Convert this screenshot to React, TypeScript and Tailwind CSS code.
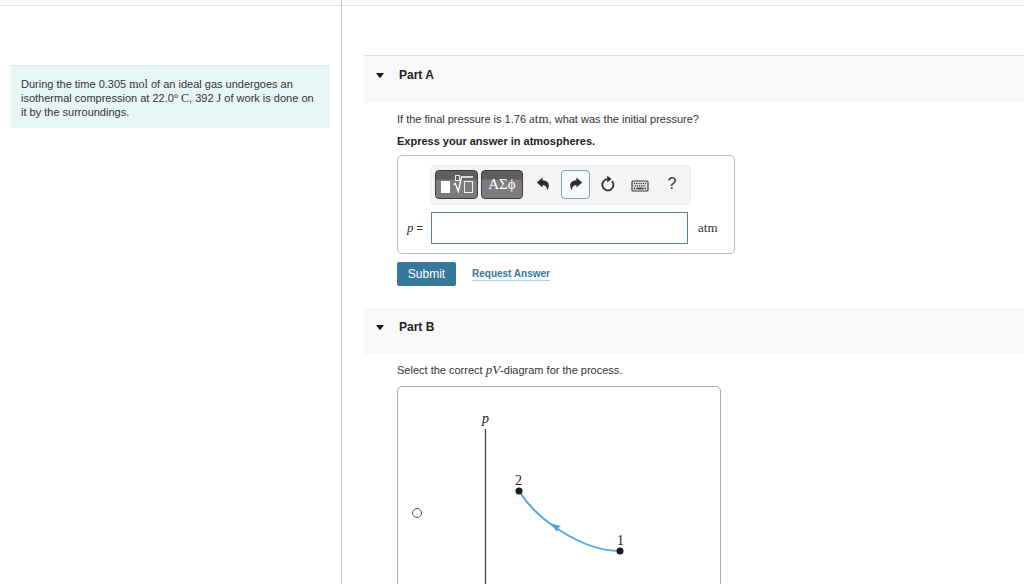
import type { ReactNode } from "react";

function MathText({ children, italic }: { children: ReactNode; italic?: boolean }) {
  return (
    <span
      className={
        italic
          ? "font-['Liberation_Serif',serif] text-[13px] leading-none italic"
          : "font-['Liberation_Serif',serif] text-[13px] leading-none"
      }
    >
      {children}
    </span>
  );
}

// unit inside a multi-line paragraph, small enough for the tight leading
function Unit({ children }: { children: ReactNode }) {
  return <span className="font-['Liberation_Serif',serif] text-xs leading-none">{children}</span>;
}

function PartHeader({ title, first }: { title: string; first?: boolean }) {
  return (
    <div
      className={
        first
          ? "flex h-12 items-start border-t border-[#dcdcdc] bg-[#f8f8f8] pt-[11px] pl-3"
          : "flex h-[46px] items-start bg-[#f8f8f8] pt-[11px] pl-3"
      }
    >
      <button type="button" className="flex h-4 items-center gap-[15px] text-xs font-bold text-[#222]">
        <svg width="8" height="5" viewBox="0 0 8 5" aria-hidden="true">
          <path d="M0 0h8L4.6 4.6a.8.8 0 0 1-1.2 0z" fill="#1a1a1a" />
        </svg>
        {title}
      </button>
    </div>
  );
}

function UndoIcon({ flip }: { flip?: boolean }) {
  return (
    <svg
      width="14"
      height="14"
      viewBox="0 0 14 14"
      aria-hidden="true"
      className={flip ? "-scale-x-100" : ""}
    >
      <path
        d="M.8 5.4L6.6.6v2.6c3.9.1 6.4 2.3 6.2 5.6-.1 1.7-.8 3.2-1.9 4.4.3-3.2-1.1-5-4.3-5.1v2.4z"
        fill="#2d2d2d"
      />
    </svg>
  );
}

function ResetIcon() {
  return (
    <svg width="16" height="18" viewBox="0 0 16 18" aria-hidden="true">
      <path d="M7.6 4.2A5.6 5.6 0 1 0 12 6" fill="none" stroke="#2d2d2d" strokeWidth="1.8" />
      <path d="M7.2 .8v6.6L11.6 4z" fill="#2d2d2d" />
    </svg>
  );
}

function KeyboardIcon() {
  return (
    <svg width="18" height="12" viewBox="0 0 18 12" aria-hidden="true">
      <rect x="1" y="1" width="16" height="10" rx="1" fill="#ddd" stroke="#3c3c3c" strokeWidth="1.2" />
      <path
        d="M3 3.5h12M3.6 5.8h11"
        stroke="#2d2d2d"
        strokeWidth="1.2"
        strokeDasharray="1.2 1"
      />
      <path d="M3 8.5h1.4M5.5 8.5h7M13.6 8.5H15" stroke="#2d2d2d" strokeWidth="1.4" />
    </svg>
  );
}

function TemplateIcon() {
  return (
    <svg width="34" height="22" viewBox="0 0 34 22" aria-hidden="true">
      <rect x="1" y="8" width="9" height="12" fill="#fff" />
      <rect x="15.5" y="2.5" width="4" height="5" fill="none" stroke="#eee" />
      <path d="M13.5 11.5l1.8-1 3 8L21.5 4H33" fill="none" stroke="#fff" strokeWidth="1.3" />
      <rect x="24.5" y="8.5" width="8" height="11" fill="none" stroke="#eee" />
    </svg>
  );
}

const darkButton =
  "flex h-[29px] items-center justify-center rounded-[4px] border border-[#3a3a3a] bg-linear-to-b from-[#5e5e5e] from-30% to-[#7c7c7e] to-35% text-white";

function Toolbar() {
  return (
    <div className="flex h-10 w-[261px] items-center rounded-[5px] border border-[#ececec] bg-[#f4f4f4] pb-[2px] pl-1">
      <button type="button" aria-label="Templates" className={`${darkButton} w-[43px]`}>
        <TemplateIcon />
      </button>
      <button
        type="button"
        className={`${darkButton} ml-[3px] w-[42px] font-['Liberation_Serif',serif] text-[15px]`}
      >
        ΑΣϕ
      </button>
      <div className="ml-[6px] flex items-center gap-1">
        <button type="button" aria-label="Undo" className="flex h-7 w-7 items-center justify-center">
          <UndoIcon />
        </button>
        <button
          type="button"
          aria-label="Redo"
          className="flex h-[29px] w-[29px] items-center justify-center rounded-[4px] border border-[#7f9db4] bg-[#f6f9fb]"
        >
          <UndoIcon flip />
        </button>
        <button type="button" aria-label="Reset" className="flex h-7 w-7 items-center justify-center">
          <ResetIcon />
        </button>
        <button
          type="button"
          aria-label="Keyboard shortcuts"
          className="flex h-7 w-7 items-center justify-center pt-1"
        >
          <KeyboardIcon />
        </button>
        <button
          type="button"
          aria-label="Help"
          className="flex h-7 w-7 items-center justify-center text-base text-[#333]"
        >
          ?
        </button>
      </div>
    </div>
  );
}

function Diagram() {
  return (
    <svg
      width="250"
      height="252"
      viewBox="0 0 250 252"
      role="img"
      aria-label="pV diagram"
      className="font-['Liberation_Serif',serif] text-sm"
    >
      <text x="32" y="36" fontStyle="italic" fill="#222">
        p
      </text>
      <path d="M35.5 42V232H230" fill="none" stroke="#444" strokeWidth="1.3" />
      <text x="65" y="98" fill="#222">
        2
      </text>
      <text x="167" y="158" fill="#222">
        1
      </text>
      <path d="M69 104C86 132 132 164 170 164" fill="none" stroke="#58acd9" strokeWidth="2" />
      <path d="M101 136.5l10 2.5-3 2-1 4z" fill="#46a6d8" />
      <circle cx="69" cy="104" r="3.5" fill="#1a1a1a" />
      <circle cx="170" cy="164" r="3.5" fill="#1a1a1a" />
    </svg>
  );
}

function PartA() {
  return (
    <section>
      <PartHeader title="Part A" first />
      <div className="pt-2 pl-[33px]">
        <p className="leading-4">
          If the final pressure is 1.76 <MathText>atm</MathText>, what was the initial pressure?
        </p>
        <p className="mt-[6px] leading-4 font-bold text-[#222]">Express your answer in atmospheres.</p>
        <div className="mt-[6px] w-[338px] rounded-[5px] border border-[#bbb] pt-[9px] pb-[9px]">
          <div className="pl-8">
            <Toolbar />
          </div>
          <div className="mt-[7px] flex items-center">
            <label htmlFor="pressure" className="w-[33px] pl-[9px] whitespace-nowrap">
              <MathText italic>p</MathText> =
            </label>
            <input
              id="pressure"
              type="text"
              className="h-8 w-[257px] border border-[#55809a] bg-white px-2 text-sm outline-none"
            />
            <span className="pl-[10px]">
              <MathText>atm</MathText>
            </span>
          </div>
        </div>
        <div className="mt-2 flex items-center gap-4">
          <button
            type="button"
            className="h-6 w-[59px] rounded-[2px] bg-[#36789a] text-xs text-white"
          >
            Submit
          </button>
          <a href="#answer" className="border-b border-[#b5d0dd] text-[10px] leading-3 font-bold text-[#36789a]">
            Request Answer
          </a>
        </div>
      </div>
    </section>
  );
}

function PartB() {
  return (
    <section className="mt-[22px]">
      <PartHeader title="Part B" />
      <div className="pt-2 pl-[33px]">
        <p className="leading-4">
          Select the correct <MathText italic>pV</MathText>-diagram for the process.
        </p>
        <label className="mt-2 flex w-[324px] items-center rounded-[5px] border border-[#aaa]">
          <input
            type="radio"
            name="diagram"
            className="ml-[14px] h-[10px] w-[10px] shrink-0 appearance-none rounded-full border border-[#555] bg-white checked:bg-[#36789a]"
          />
          <span className="ml-7">
            <Diagram />
          </span>
        </label>
      </div>
    </section>
  );
}

export default function App() {
  return (
    <div className="flex h-screen overflow-hidden bg-white font-['Liberation_Sans',Arial,sans-serif] text-[11px] text-[#333]">
      <aside className="w-[342px] shrink-0 border-r border-[#c4c4c4]">
        <div className="h-[6px] border-b border-[#e4e4e4]" />
        <div className="mt-[59px] mr-[11px] ml-[11px] border-t border-[#dbe9eb] bg-[#e8f5f7] px-[10px] pt-[11px] pb-[9px]">
          <p className="leading-[14px]">
            During the time 0.305 <Unit>mol</Unit> of an ideal gas undergoes an isothermal
            compression at 22.0<Unit>°&#8201;C</Unit>, 392 <Unit>J</Unit> of work is done on it by the
            surroundings.
          </p>
        </div>
      </aside>
      <main className="min-w-0 flex-1">
        <div className="h-[6px] border-b border-[#e4e4e4]" />
        <div className="pt-[49px] pl-[22px]">
          <PartA />
          <PartB />
        </div>
      </main>
    </div>
  );
}
